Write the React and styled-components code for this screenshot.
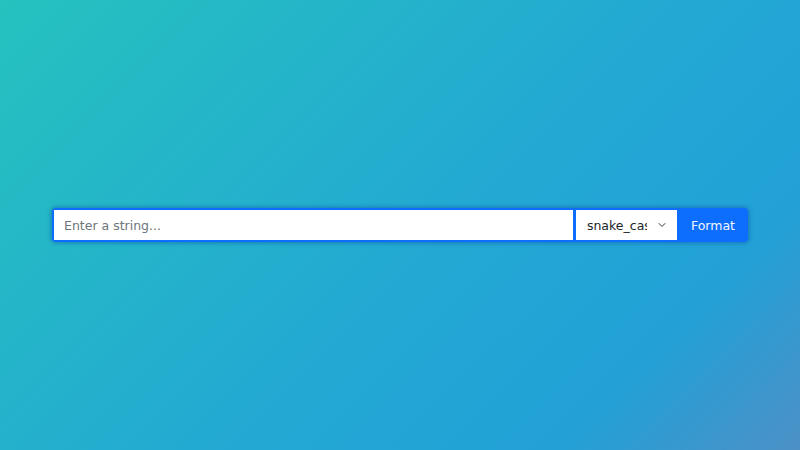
import React, { useState } from "react";
import styled, { createGlobalStyle } from "styled-components";

const GlobalStyle = createGlobalStyle`
  html, body, #root {
    margin: 0;
    height: 100%;
  }
  body {
    font-family: "DejaVu Sans", "Liberation Sans", sans-serif;
  }
  * {
    box-sizing: border-box;
  }
`;

const Page = styled.div`
  width: 100%;
  height: 100vh;
  display: flex;
  align-items: center;
  justify-content: center;
  background: linear-gradient(135deg, #25c2bf 0%, #23a8d3 55%, #22a1d7 80%, #4c90c6 100%);
`;

const Form = styled.form`
  width: 696px;
  display: flex;
  align-items: stretch;
  gap: 3px;
  padding: 2px 0 2px 2px;
  background: #0d6efd;
  border-radius: 4px;
  box-shadow: 0 0 4px 1px rgba(10, 60, 160, 0.45);
`;

const Input = styled.input`
  flex: 1;
  min-width: 0;
  height: 30px;
  padding: 0 10px;
  border: none;
  outline: none;
  background: #fff;
  font-family: inherit;
  font-size: 12.5px;
  color: #212529;

  &::placeholder {
    color: #6c757d;
  }
`;

const Select = styled.select`
  width: 101px;
  height: 30px;
  padding: 0 30px 0 11px;
  border: none;
  outline: none;
  appearance: none;
  background: #fff
    url("data:image/svg+xml,%3csvg xmlns='http://www.w3.org/2000/svg' viewBox='0 0 16 16'%3e%3cpath fill='none' stroke='%23343a40' stroke-linecap='round' stroke-linejoin='round' stroke-width='2' d='m2 5 6 6 6-6'/%3e%3c/svg%3e")
    no-repeat right 11px center / 8px 8px;
  font-family: inherit;
  font-size: 12.5px;
  color: #212529;
`;

const Button = styled.button`
  padding: 0 13px 0 11px;
  border: none;
  background: #0d6efd;
  color: #f2f7ff;
  font-family: inherit;
  font-size: 12.5px;
  border-radius: 0 4px 4px 0;
  cursor: pointer;
`;

export default function App() {
  const [value, setValue] = useState("");
  const [style, setStyle] = useState("snake_case");

  return (
    <>
      <GlobalStyle />
      <Page>
        <Form onSubmit={(e) => e.preventDefault()}>
          <Input
            placeholder="Enter a string..."
            value={value}
            onChange={(e) => setValue(e.target.value)}
          />
          <Select value={style} onChange={(e) => setStyle(e.target.value)}>
            <option value="snake_case">snake_case</option>
            <option value="camelCase">camelCase</option>
            <option value="PascalCase">PascalCase</option>
            <option value="kebab-case">kebab-case</option>
          </Select>
          <Button type="submit">Format</Button>
        </Form>
      </Page>
    </>
  );
}
